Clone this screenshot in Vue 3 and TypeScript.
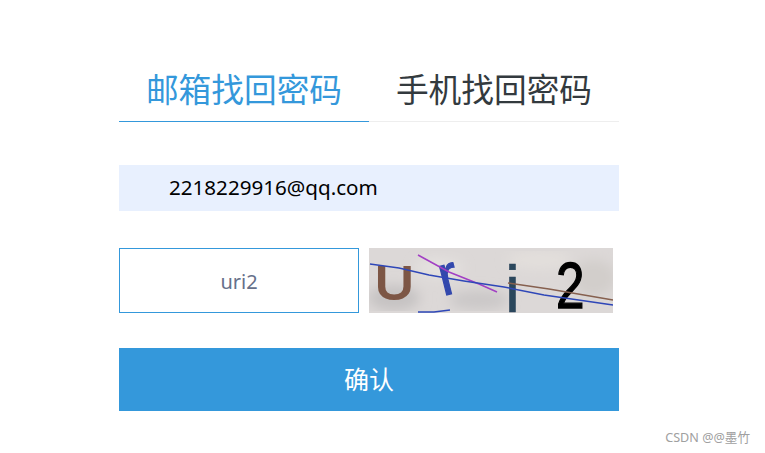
<script setup lang="ts">
const tabs: { label: string; active: boolean }[] = [
  { label: '邮箱找回密码', active: true },
  { label: '手机找回密码', active: false },
]
</script>

<template>
  <div class="page">
    <div class="form">
      <div class="tabs">
        <div v-for="t in tabs" :key="t.label" class="tab" :class="{ active: t.active }">{{ t.label }}</div>
      </div>
      <input class="email" type="text" value="2218229916@qq.com" />
      <div class="code-row">
        <input class="code" type="text" value="uri2" />
        <svg class="captcha" viewBox="0 0 244 65" width="244" height="65" xmlns="http://www.w3.org/2000/svg">
          <defs>
            <filter id="soft" x="-5%" y="-5%" width="110%" height="110%"><feGaussianBlur stdDeviation="0.7" /></filter>
            <filter id="thin" x="-5%" y="-20%" width="110%" height="140%"><feGaussianBlur stdDeviation="0.35" /></filter>
            <filter id="mottle" x="0" y="0" width="100%" height="100%"><feGaussianBlur stdDeviation="6" /></filter>
          </defs>
          <rect width="244" height="65" fill="#dcd8d7" />
          <g filter="url(#mottle)">
            <ellipse cx="25" cy="50" rx="26" ry="13" fill="#c6c3c3" />
            <ellipse cx="70" cy="20" rx="24" ry="10" fill="#e4e1df" />
            <ellipse cx="110" cy="52" rx="30" ry="10" fill="#cbc8c8" />
            <ellipse cx="170" cy="12" rx="32" ry="9" fill="#e3dfdc" />
            <ellipse cx="225" cy="30" rx="22" ry="18" fill="#d2cecb" />
          </g>
          <g filter="url(#soft)">
            <text class="glyph" font-size="47" fill="#7d5745" stroke="#7d5745" stroke-width="2" transform="translate(6 51) scale(1.14 1)">U</text>
            <text class="glyph" font-size="56" fill="#3348ad" stroke="#3348ad" stroke-width="1.2" transform="translate(74 48) rotate(-14)">r</text>
            <text class="glyph" font-size="67" fill="#2a465b" stroke="#2a465b" stroke-width="0.6" x="136" y="64">i</text>
            <text class="glyph" font-size="64" fill="#000" stroke="#000" stroke-width="1.4" transform="translate(187 60) scale(0.8 1)">2</text>
          </g>
          <g filter="url(#thin)" fill="none" stroke-width="1.5">
            <polyline points="139,35 180,41 244,52" stroke="#86604f" />
            <polyline points="49,7 80,24 110,36 128,44" stroke="#a23fc4" />
            <polyline points="1,16 30,20 60,27 95,33 135,39 175,47 244,57" stroke="#2f47b8" />
            <polyline points="49,64 65,64 81,62" stroke="#2f47b8" />
          </g>
        </svg>
      </div>
      <button class="submit" type="button"><span class="submit-label">确认</span></button>
    </div>
    <div class="mark">CSDN @@墨竹</div>
  </div>
</template>

<style>
html,
body {
  margin: 0;
  background: #fff;
}
</style>

<style scoped>
.page {
  position: relative;
  width: 765px;
  height: 453px;
  overflow: hidden;
  padding: 60px 0 0 119px;
  box-sizing: border-box;
  font-family: "Noto Sans", "Noto Sans CJK SC", sans-serif;
}
.form {
  width: 500px;
  display: flex;
  flex-direction: column;
}
.tabs {
  display: flex;
  height: 62px;
}
.tab {
  flex: 1;
  height: 61px;
  line-height: 60px;
  text-align: center;
  font-size: 32.7px;
  color: #333a3e;
  border-bottom: 1px solid #eeeeee;
}
.tab.active {
  color: #3498db;
  border-bottom-color: #3498db;
}
.email {
  margin-top: 43px;
  height: 46px;
  width: 500px;
  box-sizing: border-box;
  border: 0;
  outline: 0;
  padding: 0 0 2px 50px;
  background: #e8f0fe;
  color: #000;
  font: 20.6px "Noto Sans", sans-serif;
}
.code-row {
  margin-top: 37px;
  display: flex;
  gap: 10px;
  height: 65px;
}
.code {
  width: 240px;
  height: 65px;
  box-sizing: border-box;
  border: 1px solid #3498db;
  outline: 0;
  padding: 1px 0 0;
  text-align: center;
  color: #66708a;
  background: #fff;
  font: 20px "Noto Sans", sans-serif;
}
.captcha {
  display: block;
  flex: none;
}
.glyph {
  font-family: "Liberation Sans", sans-serif;
}
.submit {
  margin-top: 35px;
  width: 500px;
  height: 63px;
  border: 0;
  padding: 0 0 4px;
  background: #3498db;
  color: #fff;
  font-family: "Noto Sans CJK SC", sans-serif;
  font-size: 25px;
}
.submit-label {
  display: block;
  line-height: 30px;
}
.mark {
  position: absolute;
  right: 15px;
  top: 429px;
  font-size: 12.6px;
  line-height: 18px;
  color: #a0a0a0;
}
</style>
